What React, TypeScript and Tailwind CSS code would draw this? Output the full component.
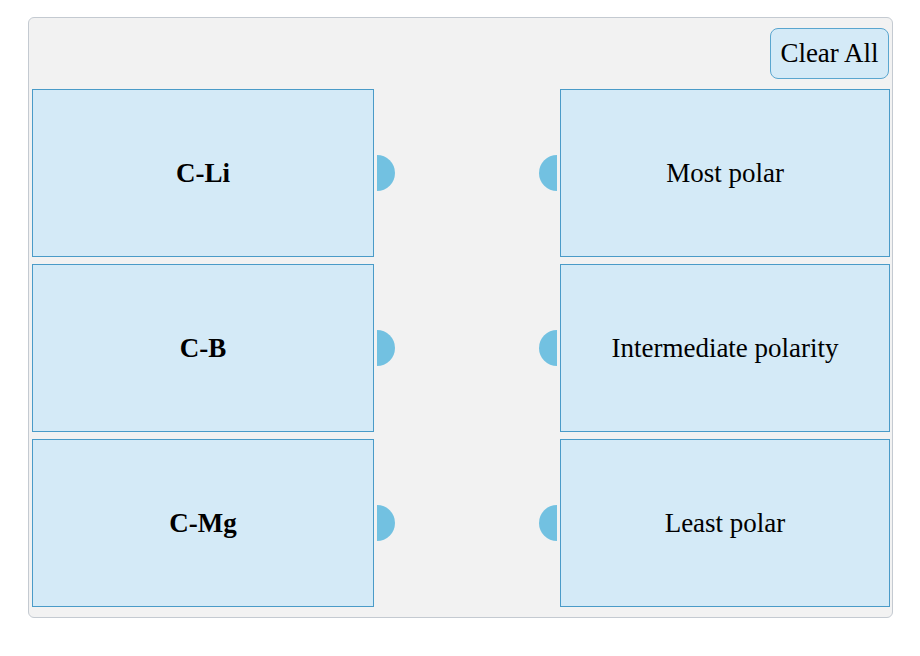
const pairs = [
  { term: "C-Li", match: "Most polar" },
  { term: "C-B", match: "Intermediate polarity" },
  { term: "C-Mg", match: "Least polar" },
];

export default function App() {
  return (
    <div className="min-h-screen bg-white pt-[17px] pl-[28px] font-['Liberation_Serif',serif] text-black">
      <div className="w-[865px] rounded-md border border-[#c4cad1] bg-[#f2f2f2] pt-[10px] pb-[10px] pl-[3px] pr-[2px]">
        <div className="mb-[10px] flex justify-end pr-[1px]">
          <button className="h-[51px] w-[119px] rounded-lg border border-[#5aa6cf] bg-[#d4eaf7] text-[27px] leading-none">
            Clear All
          </button>
        </div>

        <div className="flex flex-col gap-[7px]">
          {pairs.map((p) => (
            <div key={p.term} className="flex h-[168px]">
              <div className="flex w-[342px] items-center justify-center border border-[#4a9bc8] bg-[#d4eaf7] text-[27px] font-bold">
                {p.term}
              </div>
              {/* connector handles */}
              <div className="flex flex-1 items-center justify-between px-[3px]">
                <span className="h-[36px] w-[18px] rounded-r-full bg-[#72c1e1]" />
                <span className="h-[36px] w-[18px] rounded-l-full bg-[#72c1e1]" />
              </div>
              <div className="flex w-[330px] items-center justify-center border border-[#4a9bc8] bg-[#d4eaf7] text-[27px]">
                {p.match}
              </div>
            </div>
          ))}
        </div>
      </div>
    </div>
  );
}
